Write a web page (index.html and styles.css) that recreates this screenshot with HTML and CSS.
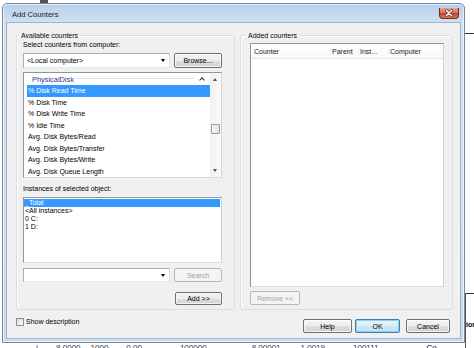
FILE: index.html
```html
<!DOCTYPE html>
<html lang="en">
<head>
  <meta charset="UTF-8" />
  <meta name="viewport" content="width=device-width, initial-scale=1.0"/>
  <title>Add Counters</title>
  <link rel="stylesheet" href="styles.css">
</head>
<body>
  <!-- the sheet behind the dialog -->
  <div class="desk">
    <i class="desk-top"></i>
    <i class="desk-line one"></i>
    <i class="desk-line two"></i>
    <i class="desk-vline"></i>
    <span class="desk-word ion">ion</span>
    <div class="desk-row">
      <span class="c1">|</span><span class="c2">8.0000</span><span class="c3">1000</span><span class="c4">0.00</span><span class="c5">100000</span><span class="c6">8.00001</span><span class="c7">1.0019</span><span class="c8">100111</span><span class="c9">Co</span>
    </div>
  </div>

  <div class="window">
    <div class="titlebar">
      <span class="title">Add Counters</span>
      <span class="close">
        <svg width="20" height="10" viewBox="0 0 20 10">
          <path d="M7 2 L13 8 M13 2 L7 8" stroke="#6b2a22" stroke-width="3" stroke-linecap="round"/>
          <path d="M7 2 L13 8 M13 2 L7 8" stroke="#fff" stroke-width="1.6" stroke-linecap="round"/>
        </svg>
      </span>
    </div>

    <div class="client">
      <div class="groups">
        <fieldset class="group group-left">
          <legend>Available counters</legend>
          <div class="label">Select counters from computer:</div>
          <div class="row">
            <div class="combo"><span>&lt;Local computer&gt;</span><i class="drop"></i></div>
            <button class="btn browse">Browse...</button>
          </div>

          <div class="list counters">
            <div class="items">
              <div class="cat"><span>PhysicalDisk</span><i class="rule"></i><b class="caret"></b></div>
              <div class="item sel">% Disk Read Time</div>
              <div class="item">% Disk Time</div>
              <div class="item">% Disk Write Time</div>
              <div class="item">% Idle Time</div>
              <div class="item">Avg. Disk Bytes/Read</div>
              <div class="item">Avg. Disk Bytes/Transfer</div>
              <div class="item">Avg. Disk Bytes/Write</div>
              <div class="item">Avg. Disk Queue Length</div>
            </div>
            <div class="vscroll">
              <i class="arr up"></i>
              <i class="thumb"></i>
              <i class="arr down"></i>
            </div>
          </div>

          <div class="label gap">Instances of selected object:</div>
          <div class="list instances">
            <div class="inst sel">_Total</div>
            <div class="inst">&lt;All instances&gt;</div>
            <div class="inst">0 C:</div>
            <div class="inst">1 D:</div>
          </div>

          <div class="row search">
            <div class="combo"><span></span><i class="drop"></i></div>
            <button class="btn" disabled>Search</button>
          </div>
          <div class="row add">
            <button class="btn">Add &gt;&gt;</button>
          </div>
        </fieldset>

        <fieldset class="group group-right">
          <legend>Added counters</legend>
          <div class="list added">
            <div class="cols">
              <span>Counter</span>
              <span>Parent</span>
              <span>Inst...</span>
              <span>Computer</span>
            </div>
          </div>
          <button class="btn remove" disabled>Remove &lt;&lt;</button>
        </fieldset>
      </div>

      <div class="footer">
        <label class="check"><i class="box"></i>Show description</label>
        <div class="buttons">
          <button class="btn help">Help</button>
          <button class="btn ok">OK</button>
          <button class="btn cancel">Cancel</button>
        </div>
      </div>
    </div>
  </div>
</body>
</html>
```

FILE: styles.css
```css
body {
  margin: 0; padding: 0;
  width: 474px; height: 348px;
  overflow: hidden;
  position: relative;
  background: #fff;
  font-family: "Liberation Sans", Arial, sans-serif;
  font-size: 7px;
  color: #000;
}

/* background sheet */
.desk-top {
  position: absolute; left: 40px; top: 0;
  width: 8px; height: 3px;
  background: #555;
}
.desk-line {
  position: absolute; left: 465px;
  width: 9px; height: 1px;
  background: #333;
}
.desk-line.one { top: 33px; }
.desk-line.two { top: 293px; }
.desk-vline {
  position: absolute; left: 465px; top: 293px;
  width: 1px; height: 55px;
  background: #555;
}
.desk-word {
  position: absolute;
  font-weight: bold;
}
.desk-word.ion { left: 466px; top: 321px; }
.desk-row {
  position: absolute; left: 0; top: 343px;
  width: 474px;
  display: flex;
  color: #333;
  font-size: 8px;
  line-height: 10px;
}
.desk-row .c1 { margin-left: 36px; }
.desk-row .c2 { margin-left: 18px; }
.desk-row .c3 { margin-left: 10px; }
.desk-row .c4 { margin-left: 18px; }
.desk-row .c5 { margin-left: 38px; }
.desk-row .c6 { margin-left: 45px; }
.desk-row .c7 { margin-left: 20px; }
.desk-row .c8 { margin-left: 28px; }
.desk-row .c9 { margin-left: 48px; color: #000; }

/* window */
.window {
  position: absolute; left: 2px; top: 3px;
  width: 463px; height: 340px;
  box-sizing: border-box;
  border: 1px solid #6f8aa8;
  border-radius: 5px 5px 0 0;
  background: linear-gradient(to bottom, #b9d0e9 0, #d3e3f3 22px, #c9dcef 100%);
  padding: 0 4px 4px 4px;
  display: flex; flex-direction: column;
  box-shadow: inset 0 0 0 1px rgba(255,255,255,0.6);
}
.titlebar {
  height: 19px;
  display: flex;
  align-items: center;
  justify-content: space-between;
  padding-left: 5px;
}
.title {
  font-size: 7.6px;
  color: #1a1a1a;
  margin-top: 1px;
}
.close {
  align-self: flex-start;
  margin-top: 4px; margin-right: 1px;
  width: 20px; height: 11px;
  box-sizing: border-box;
  border: 1px solid #6e2b22;
  border-top: none;
  border-radius: 0 0 4px 4px;
  background: linear-gradient(to bottom, #e8a594 0, #d6735d 45%, #c2432c 55%, #d87d5e 100%);
  display: flex; align-items: center; justify-content: center;
}
.close svg { display: block; }

.client {
  flex: 1;
  background: #f0f0f0;
  box-shadow: 0 0 0 1px #9fb4cc;
  display: flex; flex-direction: column;
}
.groups {
  display: grid;
  grid-template-columns: 219px 213px;
  column-gap: 5px;
  padding: 8px 0 0 9px;
}
.group {
  margin: 0;
  min-width: 0;
  border: 1px solid #d5dfe5;
  border-radius: 3px;
  padding: 0 12px 4px 6px;
  box-shadow: inset 1px 1px 0 #fff;
}
.group legend {
  padding: 0 2px;
  margin-left: -4px;
  line-height: 9px;
}
.group-right { padding: 0 8px 4px 9px; }

.label { line-height: 9px; }
.label.gap { margin-top: 6px; }

.row {
  display: flex;
  gap: 4px;
  margin-top: 4px;
}
.combo {
  width: 147px; height: 15px;
  box-sizing: border-box;
  background: #fff;
  border: 1px solid #abadb3;
  border-right-color: #dbdfe6;
  border-bottom-color: #e3e9ef;
  display: flex; align-items: center;
  justify-content: space-between;
  padding: 0 4px 0 3px;
}
.drop {
  width: 0; height: 0;
  border-left: 2.5px solid transparent;
  border-right: 2.5px solid transparent;
  border-top: 3px solid #000;
}

.btn {
  font: inherit;
  color: #000;
  padding: 0;
  width: 48px; height: 15px;
  box-sizing: border-box;
  border: 1px solid #707070;
  border-radius: 2px;
  background: linear-gradient(to bottom, #f4f4f4 0, #ececec 50%, #dedede 51%, #d2d2d2 100%);
  box-shadow: inset 0 0 0 1px rgba(255,255,255,0.7);
}
.btn:disabled {
  color: #a3a3a3;
  border-color: #b5b8ba;
  background: #f4f4f4;
  box-shadow: none;
}

.list {
  box-sizing: border-box;
  background: #fff;
  border: 1px solid #8f959c;
  border-right-color: #d0d4d8;
  border-bottom-color: #d6dadf;
}
.counters {
  margin-top: 4px;
  height: 106px;
  display: flex;
}
.items { flex: 1; }
.cat {
  height: 12px;
  display: flex; align-items: center;
  padding-left: 8px;
  color: #1e3a8c;
  font-size: 7.4px;
}
.cat .rule {
  flex: 1;
  height: 1px;
  margin: 0 6px 1px 3px;
  background: #d9e2ee;
}
.caret {
  width: 3px; height: 3px;
  margin-right: 6px; margin-top: 1px;
  border-left: 1.5px solid #1c2a55;
  border-top: 1.5px solid #1c2a55;
  transform: rotate(45deg);
}
.item {
  line-height: 11.5px;
  margin-left: 3px;
  padding-left: 1px;
}
.sel {
  background: #3399ff;
  color: #fff;
}
.vscroll {
  width: 11px;
  background: linear-gradient(to right, #f1f1f1, #fafafa);
  position: relative;
}
.arr {
  position: absolute; left: 3px;
  width: 0; height: 0;
  border-left: 2.5px solid transparent;
  border-right: 2.5px solid transparent;
}
.arr.up { top: 5px; border-bottom: 3px solid #555; }
.arr.down { bottom: 5px; border-top: 3px solid #555; }
.thumb {
  position: absolute; left: 1px; top: 51px;
  width: 9px; height: 10px;
  box-sizing: border-box;
  border: 1px solid #9a9a9a;
  border-radius: 1px;
  background: linear-gradient(to right, #f3f3f3, #e2e2e2);
}

.instances {
  margin-top: 4px;
  height: 66px;
  padding: 1px 1px 0 0;
}
.inst {
  line-height: 8px;
  padding-left: 1px;
}
.search { margin-top: 5px; }
.search .combo, .search .btn { height: 14px; }
.add {
  margin-top: 10px;
  justify-content: flex-end;
}
.add .btn { width: 47px; height: 13px; }

.added {
  margin-top: 3px;
  height: 244px;
}
.cols {
  height: 14px;
  display: grid;
  grid-template-columns: 76px 28px 30px 1fr;
  align-items: center;
  padding-left: 3px;
  border-bottom: 1px solid #e5e8ec;
  background: linear-gradient(to bottom, #fff, #f6f7f9);
  color: #222;
}
.cols span + span { border-left: 1px solid #eceef1; padding-left: 1px; }
.remove {
  margin-top: 4px;
  width: 50px; height: 14px;
}

.footer {
  display: flex;
  justify-content: space-between;
  padding: 9px 10px 0 9px;
}
.check {
  display: flex; align-items: center;
  gap: 2px;
  margin-top: -2px;
  align-self: flex-start;
  line-height: 9px;
}
.box {
  width: 8px; height: 8px;
  box-sizing: border-box;
  border: 1px solid #8e8f8f;
  background: linear-gradient(135deg, #dcdcdc, #fdfdfd);
}
.buttons { display: flex; }
.buttons .btn { height: 14px; }
.help { width: 49px; }
.ok {
  width: 45px; margin-left: 3px;
  border-color: #3c7fb1;
  background: linear-gradient(to bottom, #eaf4fb 0, #dcedf8 50%, #cfe6f6 51%, #c3e0f4 100%);
  box-shadow: inset 0 0 0 1px #8ed0f5;
}
.cancel { width: 44px; margin-left: 6px; }
```
